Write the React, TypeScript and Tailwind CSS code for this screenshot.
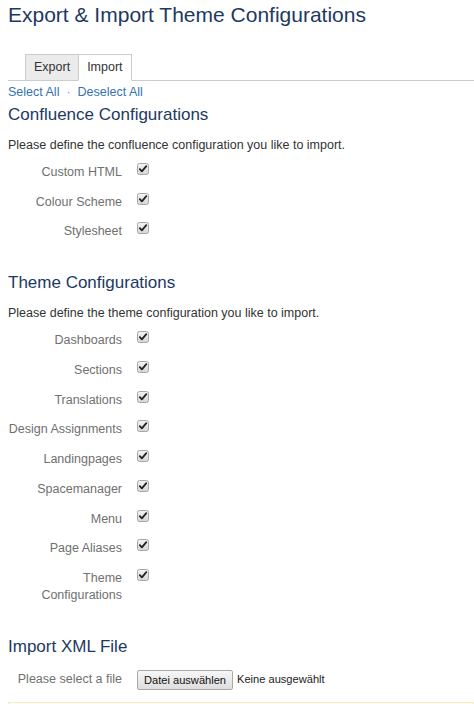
import React from "react";

const confluenceItems = ["Custom HTML", "Colour Scheme", "Stylesheet"];

const themeItems = [
  "Dashboards",
  "Sections",
  "Translations",
  "Design Assignments",
  "Landingpages",
  "Spacemanager",
  "Menu",
  "Page Aliases",
  "Theme Configurations",
];

function CheckBox() {
  return (
    <svg width="12" height="12" viewBox="0 0 12 12" className="-mt-px shrink-0">
      <defs>
        <linearGradient id="cbg" x1="0" y1="0" x2="0" y2="1">
          <stop offset="0" stopColor="#f4f4f4" />
          <stop offset="1" stopColor="#d6d6d6" />
        </linearGradient>
      </defs>
      <rect x="0.5" y="0.5" width="11" height="11" rx="2" fill="url(#cbg)" stroke="#a6a6a6" />
      <path d="M2.8 6.2 L4.9 8.4 L9.3 3.2" fill="none" stroke="#222" strokeWidth="1.8" strokeLinecap="round" strokeLinejoin="round" />
    </svg>
  );
}

function OptionRow({ label }: { label: string }) {
  return (
    <div className="flex items-start">
      <label className="w-[114px] text-right leading-[17px] text-[#707070]">{label}</label>
      <div className="ml-[15px]">
        <CheckBox />
      </div>
    </div>
  );
}

function SectionHeading({ children, className }: { children: React.ReactNode; className?: string }) {
  return (
    <h2 className={"text-[17px] leading-[20px] text-[#1d3961] " + (className ?? "")}>{children}</h2>
  );
}

export default function App() {
  return (
    <div
      className="min-h-screen bg-white pl-2 text-[12.5px] text-[#333]"
      style={{ fontFamily: '"Liberation Sans", Arial, sans-serif' }}
    >
      <h1 className="text-[21px] leading-[30px] text-[#1d3961]">Export &amp; Import Theme Configurations</h1>

      {/* Tabs */}
      <div className="mt-6 flex h-[27px] border-b border-[#cccccc] pl-[17px]">
        <div className="-mb-px flex h-[27px] items-center border border-[#cccccc] bg-[#ebebeb] px-[8px] leading-[25px] text-[#333]">
          Export
        </div>
        <div className="-mb-px -ml-px flex h-[27px] items-center border border-[#cccccc] border-b-white bg-white px-[8px] leading-[25px] text-[#333]">
          Import
        </div>
      </div>

      <div className="mt-[3px] leading-[17px]">
        <a className="text-[#3572b0]">Select All</a>
        <span className="mx-[7px] text-[#999]">·</span>
        <a className="text-[#3572b0]">Deselect All</a>
      </div>

      {/* Confluence */}
      <SectionHeading className="mt-1">Confluence Configurations</SectionHeading>
      <p className="mt-3 leading-[17px]">Please define the confluence configuration you like to import.</p>
      <div className="mt-[10px] flex flex-col gap-[12.7px]">
        {confluenceItems.map((item) => (
          <OptionRow key={item} label={item} />
        ))}
      </div>

      {/* Theme */}
      <SectionHeading className="mt-[33px]">Theme Configurations</SectionHeading>
      <p className="mt-3 leading-[17px]">Please define the theme configuration you like to import.</p>
      <div className="mt-[10px] flex flex-col gap-[12.7px]">
        {themeItems.map((item) => (
          <OptionRow key={item} label={item} />
        ))}
      </div>

      {/* Import */}
      <SectionHeading className="mt-[33px]">Import XML File</SectionHeading>
      <div className="mt-[13px] flex items-center">
        <label className="w-[114px] text-right leading-[17px] text-[#707070]">Please select a file</label>
        <button className="ml-[15px] h-[20px] rounded-[2px] border border-[#a9a9a9] bg-gradient-to-b from-[#f7f7f7] to-[#dedede] px-[6px] text-[11.1px] leading-[18px] text-[#111]">
          Datei auswählen
        </button>
        <span className="ml-[4px] text-[11.1px] leading-[17px] text-[#222]">Keine ausgewählt</span>
      </div>

      <div className="mt-3 h-[60px] border border-[#f3ebc4] bg-[#fffdf2]" />
    </div>
  );
}
